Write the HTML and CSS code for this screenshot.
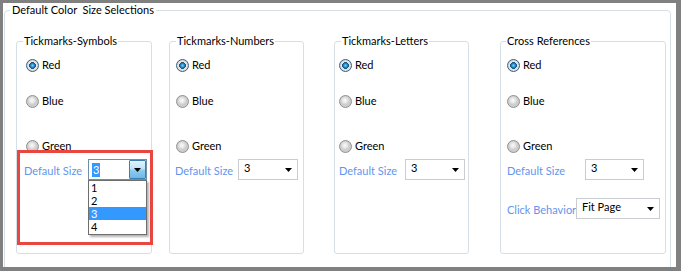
FILE: index.html
```html
<!DOCTYPE html>
<html>
<head>
<meta charset="utf-8">
<link rel="stylesheet" href="styles.css">
</head>
<body>
<div class="screen">
  <fieldset class="outer">
    <legend class="outer-title">Default Color&nbsp; Size Selections</legend>
    <div class="groups">
      <fieldset class="group g1">
        <legend class="group-title">Tickmarks-Symbols</legend>
        <div class="opts">
          <div class="opt opt-red"><span class="radio on"></span>Red</div>
          <div class="opt opt-blue"><span class="radio"></span>Blue</div>
          <div class="opt opt-green"><span class="radio"></span>Green</div>
          <div class="field field-size">
            <span class="flabel">Default Size</span>
            <div class="combo open">
              <span class="value"><span class="sel">3</span></span>
              <span class="btn"><svg class="tri" width="7" height="4" viewBox="0 0 7 4"><polygon points="0,0 7,0 3.5,4" fill="#000"/></svg></span>
              <ul class="list">
                <li>1</li>
                <li>2</li>
                <li class="cur">3</li>
                <li>4</li>
              </ul>
            </div>
          </div>
        </div>
      </fieldset>
      <fieldset class="group g2">
        <legend class="group-title">Tickmarks-Numbers</legend>
        <div class="opts">
          <div class="opt opt-red"><span class="radio on"></span>Red</div>
          <div class="opt opt-blue"><span class="radio"></span>Blue</div>
          <div class="opt opt-green"><span class="radio"></span>Green</div>
          <div class="field field-size">
            <span class="flabel">Default Size</span>
            <div class="combo">
              <span class="value">3</span>
              <svg class="tri" width="7" height="4" viewBox="0 0 7 4"><polygon points="0,0 7,0 3.5,4" fill="#000"/></svg>
            </div>
          </div>
        </div>
      </fieldset>
      <fieldset class="group g3">
        <legend class="group-title">Tickmarks-Letters</legend>
        <div class="opts">
          <div class="opt opt-red"><span class="radio on"></span>Red</div>
          <div class="opt opt-blue"><span class="radio"></span>Blue</div>
          <div class="opt opt-green"><span class="radio"></span>Green</div>
          <div class="field field-size">
            <span class="flabel">Default Size</span>
            <div class="combo">
              <span class="value">3</span>
              <svg class="tri" width="7" height="4" viewBox="0 0 7 4"><polygon points="0,0 7,0 3.5,4" fill="#000"/></svg>
            </div>
          </div>
        </div>
      </fieldset>
      <fieldset class="group g4">
        <legend class="group-title">Cross References</legend>
        <div class="opts">
          <div class="opt opt-red"><span class="radio on"></span>Red</div>
          <div class="opt opt-blue"><span class="radio"></span>Blue</div>
          <div class="opt opt-green"><span class="radio"></span>Green</div>
          <div class="field field-size">
            <span class="flabel">Default Size</span>
            <div class="combo">
              <span class="value">3</span>
              <svg class="tri" width="7" height="4" viewBox="0 0 7 4"><polygon points="0,0 7,0 3.5,4" fill="#000"/></svg>
            </div>
          </div>
          <div class="field field-click">
            <span class="flabel">Click Behavior</span>
            <div class="combo wide">
              <span class="value">Fit Page</span>
              <svg class="tri" width="7" height="4" viewBox="0 0 7 4"><polygon points="0,0 7,0 3.5,4" fill="#000"/></svg>
            </div>
          </div>
        </div>
      </fieldset>
    </div>
  </fieldset>
  <div class="highlight"></div>
</div>
</body>
</html>
```
FILE: styles.css
```css
html, body {
  margin: 0;
  padding: 0;
}
body {
  background: #808080;
  width: 681px;
  height: 271px;
  box-sizing: border-box;
  padding: 3px 5px 4px 3px;
  font-family: Lato, "Liberation Sans", sans-serif;
  font-size: 11px;
  color: #000;
}
.screen {
  position: relative;
  background: #fff;
  height: 264px;
  overflow: hidden;
}
.outer {
  margin: 0 5px 0 1px;
  padding: 0 0 19px 0;
  min-width: 0;
  border: 1px solid #d5dfe5;
  border-radius: 4px;
}
.outer-title {
  margin-left: 5px;
  padding: 0 2px;
  line-height: 14px;
}
.groups {
  display: flex;
  padding-top: 17px;
  align-items: flex-start;
}
.group {
  margin: 0;
  padding: 0;
  min-width: 0;
  border: 1px solid #d5dfe5;
  border-radius: 3px;
  box-sizing: border-box;
}
.group-title {
  margin-left: 6px;
  padding: 0 1px;
  line-height: 14px;
}
.g1 { margin-left: 11px; width: 136px; --pad: 9px; --lab: -2px; --lw: 64px; }
.g2 { margin-left: 17px; width: 135px; --pad: 6px; --lab: -1px; --lw: 63px; }
.g3 { margin-left: 30px; width: 135px; --pad: 4px; --lab: 0px; --lw: 66px; }
.g4 { margin-left: 31px; width: 166px; --pad: 6px; --lab: 0px; --lw: 78px; }
.g4 .group-title { margin-left: 5px; }

.opts {
  height: 196px;
  padding: 9px 0 0 var(--pad);
  display: flex;
  flex-direction: column;
  align-items: flex-start;
}
.opt {
  display: flex;
  align-items: center;
  height: 16px;
  line-height: 16px;
}
.opt-blue { margin-top: 20px; }
.opt-green { margin-top: 29px; }
.radio {
  width: 13px;
  height: 13px;
  box-sizing: border-box;
  border-radius: 50%;
  border: 1px solid #8f9090;
  margin-right: 3px;
  background: radial-gradient(circle closest-side at 45% 40%, #fbfbfb 0, #e9e9e9 50%, #cdcdcd 100%);
}
.radio.on {
  border-color: #3b5f7e;
  background: radial-gradient(circle closest-side at 50% 50%, #7fd3f7 0, #2893d2 30%, #0d5a8e 52%, #275a80 60%, #eeeeee 66%, #d2d2d2 100%);
}
.field {
  display: flex;
  align-items: center;
  height: 21px;
  margin-top: 5px;
}
.field-click {
  margin-top: 18px;
}
.flabel {
  color: #6495ed;
  margin-left: var(--lab);
  width: var(--lw);
  flex: none;
  padding-top: 2px;
  white-space: nowrap;
}
.field-click .flabel { width: 69px; }
.combo {
  position: relative;
  box-sizing: border-box;
  width: 60px;
  height: 21px;
  border: 1px solid #c9cdd1;
  background: #fff;
  display: flex;
  align-items: center;
  padding-left: 5px;
}
.g1 .combo, .g4 .combo { width: 59px; }
.g4 .combo.wide { width: 84px; }
.combo .value {
  flex: 1;
  line-height: 14px;
  padding-bottom: 3px;
  white-space: nowrap;
}
.combo .tri {
  margin-right: 5px;
  flex: none;
}
.combo.open {
  border-color: #6d8fab;
  padding-left: 3px;
}
.sel {
  background: #3399ff;
  color: #fff;
  padding: 0 1px;
  display: inline-block;
  line-height: 14px;
}
.combo.open .value { padding-bottom: 0; }
.btn {
  align-self: stretch;
  width: 17px;
  box-sizing: border-box;
  border: 1px solid #3c7fb1;
  border-radius: 1px;
  background: linear-gradient(#e3f3fc 0, #bfe3f7 45%, #8ccbee 55%, #6fb8e6 100%);
  display: flex;
  align-items: center;
  justify-content: center;
}
.btn .tri { margin: 0; }
.list {
  position: absolute;
  left: -1px;
  top: 20px;
  width: 59px;
  box-sizing: border-box;
  margin: 0;
  padding: 0 0 1px 0;
  list-style: none;
  background: #fff;
  border: 1px solid #6e6e6e;
  box-shadow: 2px 2px 2px rgba(0, 0, 0, 0.3);
  z-index: 2;
}
.list li {
  height: 13px;
  line-height: 13px;
  padding-left: 2px;
}
.list li.cur {
  background: #3399ff;
  color: #fff;
}
.highlight {
  position: absolute;
  left: 14px;
  top: 147px;
  width: 136px;
  height: 95px;
  box-sizing: border-box;
  border: 3px solid #e8463f;
  z-index: 1;
}
```
